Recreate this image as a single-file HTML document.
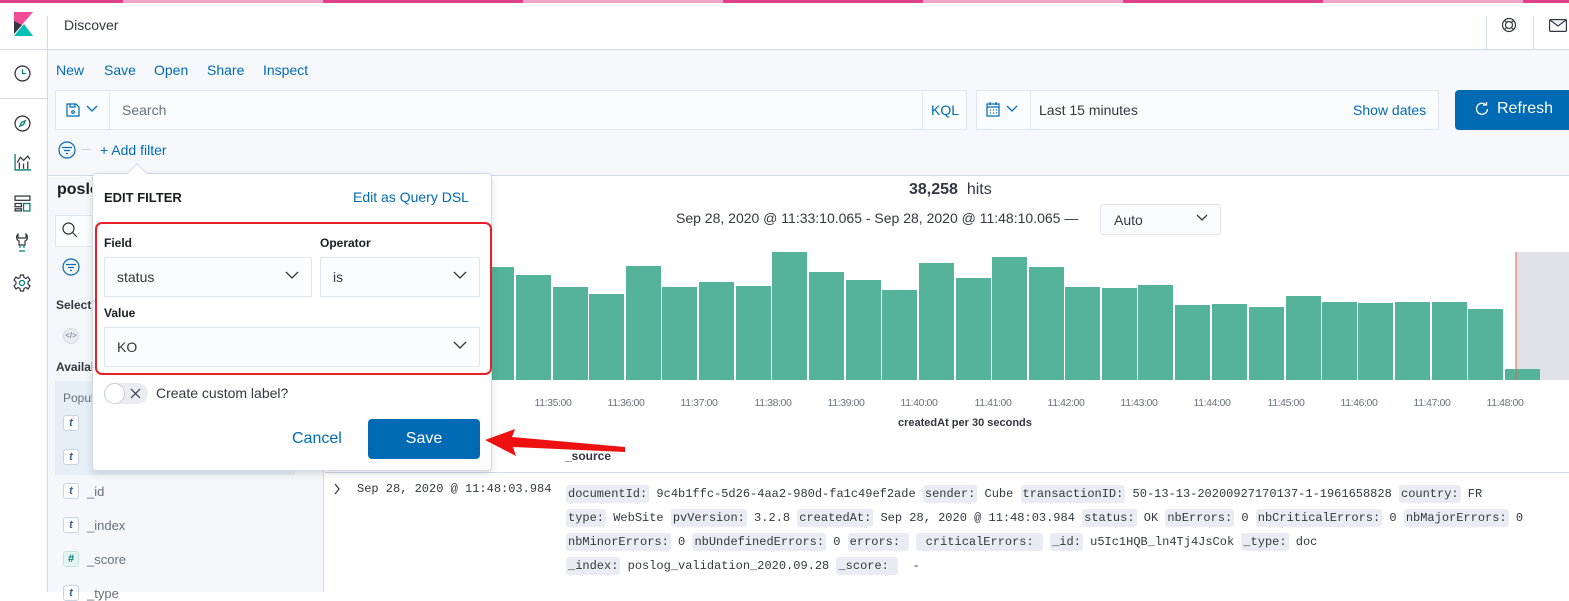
<!DOCTYPE html>
<html><head><meta charset="utf-8"><style>
*{box-sizing:border-box;margin:0;padding:0}
body{width:1569px;height:592px;overflow:hidden;position:relative;background:#fff;font-family:"Liberation Sans",sans-serif;color:#343741;font-size:14px}
.a{position:absolute}
.lnk{color:#006bb4}
.mono{font-family:"Liberation Mono",monospace;font-size:12px;color:#343741;white-space:nowrap}
.tag{background:#e9edf3;border-radius:3px;padding:2px 2px}
.sel{position:absolute;background:#fbfcfd;border:1px solid #e1e5ee;height:40px;font-size:14px;color:#343741;padding:11px 12px}
.chev{position:absolute;right:12px;top:13px}
.ti{position:absolute;left:63px;width:16px;height:16px;border:1px solid #c9d3e0;border-radius:3px;font-size:11px;font-weight:bold;font-style:italic;color:#3b5f8a;text-align:center;line-height:14px;background:#fff}
.fn{position:absolute;left:87px;font-size:13px;color:#69707d}
.ax{position:absolute;top:397px;font-size:10.5px;color:#69707d;width:60px;text-align:center;margin-left:-30px;letter-spacing:-0.4px}
</style></head><body>
<div class="a" style="left:0;top:0;width:1569px;height:3px;background:linear-gradient(90deg,#e0408a 0 123px,#f0a8c8 123px 323px,#e0408a 323px 523px,#f0a8c8 523px 723px,#e0408a 723px 923px,#f0a8c8 923px 1123px,#e0408a 1123px 1323px,#f0a8c8 1323px 1523px,#e0408a 1523px)"></div>
<div class="a" style="left:0;top:3px;width:1569px;height:47px;background:#fff;border-bottom:1px solid #d3dae6;box-shadow:0 1px 3px rgba(0,0,0,.08)"></div>
<svg class="a" style="left:14px;top:12px" width="19" height="24" viewBox="0 0 19 24"><path d="M0 0H19L0 22Z" fill="#f04e98"/><path d="M0 9L8 13L0 22Z" fill="#343741"/><path d="M0 24L10 12L19 24Z" fill="#00bfb3"/></svg>
<div class="a" style="left:47px;top:16px;width:1px;height:34px;background:#d3dae6"></div>
<div class="a" style="left:64px;top:17px;font-size:14px;color:#343741">Discover</div>
<div class="a" style="left:1486px;top:16px;width:1px;height:33px;background:#d3dae6"></div>
<div class="a" style="left:1533px;top:16px;width:1px;height:33px;background:#d3dae6"></div>
<svg class="a" style="left:1501px;top:17px" width="16" height="16" viewBox="0 0 16 16" fill="none" stroke="#343741" stroke-width="1.2"><circle cx="8" cy="8" r="6.5"/><circle cx="8" cy="8" r="3.5"/><path d="M3.5 3.5L5.5 5.5M12.5 3.5L10.5 5.5M3.5 12.5L5.5 10.5M12.5 12.5L10.5 10.5"/></svg>
<svg class="a" style="left:1549px;top:19px" width="18" height="13" viewBox="0 0 18 13" fill="none" stroke="#343741" stroke-width="1.2"><rect x=".6" y=".6" width="16.8" height="11.8" rx="1"/><path d="M1 1L9 7L17 1"/></svg>
<div class="a" style="left:0;top:50px;width:48px;height:542px;background:#fff;border-right:1px solid #d3dae6"></div>
<div class="a" style="left:0;top:98px;width:47px;height:1px;background:#d3dae6"></div>
<svg class="a" style="left:14px;top:65px" width="17" height="17" viewBox="0 0 16 16" fill="none" stroke="#343741" stroke-width="1.2"><circle cx="8" cy="8" r="7"/><path d="M8 4V8H11" stroke="#017d73"/></svg>
<svg class="a" style="left:14px;top:115px" width="17" height="17" viewBox="0 0 16 16" fill="none" stroke="#343741" stroke-width="1.2"><circle cx="8" cy="8" r="7"/><path d="M10.5 5.5L9 9L5.5 10.5L7 7Z" stroke="#017d73"/></svg>
<svg class="a" style="left:14px;top:153px" width="17" height="18" viewBox="0 0 16 17" fill="none" stroke="#343741" stroke-width="1.2"><path d="M1 1V16H16" stroke="#017d73"/><path d="M3 9L6 4L9 7L13 3L15 6"/><path d="M5 15V9M9 15V10M13 15V8"/></svg>
<svg class="a" style="left:14px;top:195px" width="17" height="17" viewBox="0 0 16 16" fill="none" stroke="#343741" stroke-width="1.2"><rect x="1" y="1" width="14" height="4"/><rect x="1" y="8" width="6" height="3"/><rect x="1" y="13" width="6" height="2"/><rect x="9" y="8" width="6" height="7" stroke="#017d73"/></svg>
<svg class="a" style="left:15px;top:233px" width="14" height="19" viewBox="0 0 14 19" fill="none" stroke="#343741" stroke-width="1.2"><path d="M3 1C1 3 1 7 4 8V12H10V8C13 7 13 3 11 1V5H3Z"/><path d="M5 12V15M9 12V15M4 18H10" stroke="#017d73"/></svg>
<svg class="a" style="left:13px;top:274px" width="18" height="18" viewBox="0 0 18 18" fill="none" stroke="#343741" stroke-width="1.2"><circle cx="9" cy="9" r="2.5" stroke="#017d73"/><path d="M7.5 1H10.5L11 3.5L13 4.5L15 3L17 6L15 8V10L17 12L15 15L13 13.5L11 14.5L10.5 17H7.5L7 14.5L5 13.5L3 15L1 12L3 10V8L1 6L3 3L5 4.5L7 3.5Z"/></svg>
<div class="a" style="left:48px;top:50px;width:1521px;height:126px;background:#f7f8fc;border-bottom:1px solid #d3dae6"></div>
<div class="a lnk" style="left:56px;top:62px">New</div>
<div class="a lnk" style="left:104px;top:62px">Save</div>
<div class="a lnk" style="left:154px;top:62px">Open</div>
<div class="a lnk" style="left:207px;top:62px">Share</div>
<div class="a lnk" style="left:263px;top:62px">Inspect</div>
<div class="a" style="left:55px;top:90px;width:912px;height:40px;background:#fbfcfd;border:1px solid #e1e5ee"></div>
<div class="a" style="left:109px;top:91px;width:1px;height:38px;background:#e1e5ee"></div>
<div class="a" style="left:922px;top:91px;width:1px;height:38px;background:#e1e5ee"></div>
<svg class="a" style="left:66px;top:103px" width="14" height="14" viewBox="0 0 14 14" fill="none" stroke="#006bb4" stroke-width="1.2"><path d="M1 1H10L13 4V13H1Z"/><path d="M4 1V4H9V1"/><circle cx="7" cy="9" r="1.3"/></svg>
<svg class="a" style="left:86px;top:105px" width="12" height="8" viewBox="0 0 12 8" fill="none" stroke="#006bb4" stroke-width="1.3"><path d="M1 1L6 6L11 1"/></svg>
<div class="a" style="left:122px;top:102px;color:#69707d">Search</div>
<div class="a lnk" style="left:931px;top:102px">KQL</div>
<div class="a" style="left:976px;top:90px;width:463px;height:40px;background:#fbfcfd;border:1px solid #e1e5ee"></div>
<div class="a" style="left:1030px;top:91px;width:1px;height:38px;background:#e1e5ee"></div>
<svg class="a" style="left:986px;top:102px" width="14" height="15" viewBox="0 0 14 15" fill="none" stroke="#006bb4" stroke-width="1.2"><rect x="1" y="2" width="12" height="12"/><path d="M1 5H13M4 0V3M10 0V3M4 8H5M7 8H8M10 8H11M4 11H5M7 11H8M10 11H11"/></svg>
<svg class="a" style="left:1006px;top:105px" width="12" height="8" viewBox="0 0 12 8" fill="none" stroke="#006bb4" stroke-width="1.3"><path d="M1 1L6 6L11 1"/></svg>
<div class="a" style="left:1039px;top:102px;color:#343741">Last 15 minutes</div>
<div class="a lnk" style="left:1353px;top:102px">Show dates</div>
<div class="a" style="left:1455px;top:90px;width:114px;height:40px;background:#006bb4;border-radius:4px 0 0 4px"></div>
<svg class="a" style="left:1475px;top:102px" width="14" height="14" viewBox="0 0 14 14" fill="none" stroke="#fff" stroke-width="1.3"><path d="M11 3A5.5 5.5 0 1 0 12.5 7"/><path d="M8 3H11.5V0"/></svg>
<div class="a" style="left:1497px;top:100px;color:#fff;font-size:16px">Refresh</div>
<svg class="a" style="left:58px;top:141px" width="18" height="18" viewBox="0 0 18 18" fill="none" stroke="#006bb4" stroke-width="1.2"><circle cx="9" cy="9" r="8"/><path d="M4 6.5H14M6 9.5H12M8 12.5H10"/></svg>
<div class="a" style="left:82px;top:149px;width:9px;height:1px;background:#c9d0dc"></div>
<div class="a lnk" style="left:100px;top:142px">+ Add filter</div>
<div class="a" style="left:48px;top:177px;width:276px;height:415px;background:#f5f7fa;border-right:1px solid #d3dae6"></div>
<div class="a" style="left:57px;top:181px;font-size:16px;font-weight:bold;color:#1a1c21">poslog</div>
<div class="a" style="left:55px;top:215px;width:60px;height:32px;background:#fbfcfd;border:1px solid #e1e5ee"></div>
<svg class="a" style="left:62px;top:222px" width="16" height="16" viewBox="0 0 16 16" fill="none" stroke="#343741" stroke-width="1.2"><circle cx="6.5" cy="6.5" r="5.5"/><path d="M10.5 10.5L15 15"/></svg>
<svg class="a" style="left:62px;top:258px" width="18" height="18" viewBox="0 0 18 18" fill="none" stroke="#006bb4" stroke-width="1.2"><circle cx="9" cy="9" r="8"/><path d="M4 6.5H14M6 9.5H12M8 12.5H10"/></svg>
<div class="a" style="left:56px;top:298px;font-size:12px;font-weight:bold">Select</div>
<div class="a" style="left:63px;top:328px;width:16px;height:16px;border-radius:50%;background:#e9edf3;border:1px solid #d3dae6;font-size:8px;color:#69707d;text-align:center;line-height:14px">&lt;/&gt;</div>
<div class="a" style="left:56px;top:360px;font-size:12px;font-weight:bold">Available</div>
<div class="a" style="left:55px;top:381px;width:240px;height:94px;background:#e6eef7"></div>
<div class="a" style="left:63px;top:391px;font-size:12px;color:#69707d">Popular</div>
<div class="ti" style="top:415px">t</div>
<div class="ti" style="top:449px">t</div>
<div class="ti" style="top:483px">t</div><div class="fn" style="top:484px">_id</div>
<div class="ti" style="top:517px">t</div><div class="fn" style="top:518px">_index</div>
<div class="ti" style="top:551px;color:#017d73;background:#e6f4f1;border-color:#c3e3dc;font-style:normal">#</div><div class="fn" style="top:552px">_score</div>
<div class="ti" style="top:585px">t</div><div class="fn" style="top:586px">_type</div>
<div class="a" style="left:909px;top:181px;font-size:16px"><b>38,258</b>&nbsp; hits</div>
<div class="a" style="left:676px;top:210px;font-size:14px">Sep 28, 2020 @ 11:33:10.065 - Sep 28, 2020 @ 11:48:10.065 —</div>
<div class="a" style="left:1100px;top:204px;width:121px;height:31px;background:#fbfcfd;border:1px solid #e1e5ee;border-radius:3px;padding:7px 13px;font-size:14px">Auto</div>
<svg class="a" style="left:1196px;top:214px" width="12" height="8" viewBox="0 0 12 8" fill="none" stroke="#343741" stroke-width="1.3"><path d="M1 1L6 6L11 1"/></svg>
<div class="a" style="left:1516px;top:252px;width:53px;height:128px;background:#e0e2e8"></div>
<svg class="a" style="left:0;top:0" width="1569" height="592">
<g fill="#54b399">
<rect x="479" y="267" width="35" height="113"/>
<rect x="516" y="275" width="35" height="105"/>
<rect x="553" y="287" width="35" height="93"/>
<rect x="589" y="294" width="35" height="86"/>
<rect x="626" y="266" width="35" height="114"/>
<rect x="662" y="287" width="35" height="93"/>
<rect x="699" y="282" width="35" height="98"/>
<rect x="736" y="286" width="35" height="94"/>
<rect x="772" y="252" width="35" height="128"/>
<rect x="809" y="272" width="35" height="108"/>
<rect x="846" y="280" width="35" height="100"/>
<rect x="882" y="290" width="35" height="90"/>
<rect x="919" y="263" width="35" height="117"/>
<rect x="956" y="278" width="35" height="102"/>
<rect x="992" y="257" width="35" height="123"/>
<rect x="1029" y="267" width="35" height="113"/>
<rect x="1065" y="287" width="35" height="93"/>
<rect x="1102" y="288" width="35" height="92"/>
<rect x="1138" y="285" width="35" height="95"/>
<rect x="1175" y="305" width="35" height="75"/>
<rect x="1212" y="304" width="35" height="76"/>
<rect x="1249" y="307" width="35" height="73"/>
<rect x="1286" y="296" width="35" height="84"/>
<rect x="1322" y="302" width="35" height="78"/>
<rect x="1358" y="303" width="35" height="77"/>
<rect x="1395" y="302" width="35" height="78"/>
<rect x="1432" y="302" width="35" height="78"/>
<rect x="1468" y="309" width="35" height="71"/>
<rect x="1505" y="369" width="35" height="11"/>
</g>
<line x1="1516" y1="252" x2="1516" y2="380" stroke="#e7664c" stroke-width="1"/>
</svg>
<div class="ax" style="left:553px">11:35:00</div><div class="ax" style="left:626px">11:36:00</div><div class="ax" style="left:699px">11:37:00</div><div class="ax" style="left:773px">11:38:00</div><div class="ax" style="left:846px">11:39:00</div><div class="ax" style="left:919px">11:40:00</div><div class="ax" style="left:993px">11:41:00</div><div class="ax" style="left:1066px">11:42:00</div><div class="ax" style="left:1139px">11:43:00</div><div class="ax" style="left:1212px">11:44:00</div><div class="ax" style="left:1286px">11:45:00</div><div class="ax" style="left:1359px">11:46:00</div><div class="ax" style="left:1432px">11:47:00</div><div class="ax" style="left:1505px">11:48:00</div>
<div class="a" style="left:898px;top:417px;font-size:11px;font-weight:bold;color:#343741">createdAt per 30 seconds</div>
<div class="a" style="left:565px;top:449px;font-size:12px;font-weight:bold">_source</div>
<div class="a" style="left:325px;top:472px;width:1244px;height:1px;background:#d3dae6"></div>
<svg class="a" style="left:333px;top:483px" width="8" height="12" viewBox="0 0 8 12" fill="none" stroke="#343741" stroke-width="1.2"><path d="M2 1L6 6L2 11"/></svg>
<div class="a mono" style="left:357px;top:482px">Sep 28, 2020 @ 11:48:03.984</div>
<div class="a mono" style="left:566px;top:482px;line-height:24px">
<div><span class="tag">documentId:</span> 9c4b1ffc-5d26-4aa2-980d-fa1c49ef2ade <span class="tag">sender:</span> Cube <span class="tag">transactionID:</span> 50-13-13-20200927170137-1-1961658828 <span class="tag">country:</span> FR</div>
<div><span class="tag">type:</span> WebSite <span class="tag">pvVersion:</span> 3.2.8 <span class="tag">createdAt:</span> Sep 28, 2020 @ 11:48:03.984 <span class="tag">status:</span> OK <span class="tag">nbErrors:</span> 0 <span class="tag">nbCriticalErrors:</span> 0 <span class="tag">nbMajorErrors:</span> 0</div>
<div><span class="tag">nbMinorErrors:</span> 0 <span class="tag">nbUndefinedErrors:</span> 0 <span class="tag">errors:&nbsp;</span> <span class="tag">&nbsp;criticalErrors:&nbsp;</span> <span class="tag">_id:</span> u5Ic1HQB_ln4Tj4JsCok <span class="tag">_type:</span> doc</div>
<div><span class="tag">_index:</span> poslog_validation_2020.09.28 <span class="tag">_score:&nbsp;</span> &nbsp;-</div>
</div>
<div class="a" style="left:92px;top:173px;width:400px;height:298px;background:#fff;border:1px solid #d3dae6;border-radius:4px;box-shadow:0 3px 8px rgba(0,0,0,.12)"></div>
<div class="a" style="left:130px;top:166px;width:14px;height:14px;background:#fff;border-left:1px solid #d3dae6;border-top:1px solid #d3dae6;transform:rotate(45deg)"></div>
<div class="a" style="left:104px;top:190px;font-size:13px;font-weight:bold;color:#1a1c21">EDIT FILTER</div>
<div class="a lnk" style="left:353px;top:189px;font-size:14px">Edit as Query DSL</div>
<div class="a" style="left:95px;top:222px;width:397px;height:153px;border:2px solid #e8202a;border-radius:7px"></div>
<div class="a" style="left:104px;top:236px;font-size:12px;font-weight:bold;color:#1a1c21">Field</div>
<div class="a" style="left:320px;top:236px;font-size:12px;font-weight:bold;color:#1a1c21">Operator</div>
<div class="sel" style="left:104px;top:257px;width:208px">status<svg class="chev" width="14" height="9" viewBox="0 0 14 9" fill="none" stroke="#343741" stroke-width="1.3"><path d="M1 1L7 7L13 1"/></svg></div>
<div class="sel" style="left:320px;top:257px;width:160px">is<svg class="chev" width="14" height="9" viewBox="0 0 14 9" fill="none" stroke="#343741" stroke-width="1.3"><path d="M1 1L7 7L13 1"/></svg></div>
<div class="a" style="left:104px;top:306px;font-size:12px;font-weight:bold;color:#1a1c21">Value</div>
<div class="sel" style="left:104px;top:327px;width:376px">KO<svg class="chev" width="14" height="9" viewBox="0 0 14 9" fill="none" stroke="#343741" stroke-width="1.3"><path d="M1 1L7 7L13 1"/></svg></div>
<div class="a" style="left:104px;top:383px;width:44px;height:21px;border-radius:11px;background:#eaecf0"></div>
<div class="a" style="left:104px;top:383px;width:21px;height:21px;border-radius:50%;background:#fff;border:1px solid #c9ceda"></div>
<svg class="a" style="left:130px;top:388px" width="11" height="11" viewBox="0 0 11 11" stroke="#343741" stroke-width="1.2"><path d="M1 1L10 10M10 1L1 10"/></svg>
<div class="a" style="left:156px;top:385px;font-size:14px;color:#343741">Create custom label?</div>
<div class="a lnk" style="left:292px;top:430px;font-size:16px">Cancel</div>
<div class="a" style="left:368px;top:419px;width:112px;height:40px;background:#006bb4;border-radius:4px;color:#fff;font-size:16px;text-align:center;line-height:40px">Save</div>
<svg class="a" style="left:480px;top:425px" width="150" height="35" viewBox="0 0 150 35"><path d="M5 15L35 4L32 12L145 22L145 27L33 22L36 31Z" fill="#ee1111"/></svg>
</body></html>
